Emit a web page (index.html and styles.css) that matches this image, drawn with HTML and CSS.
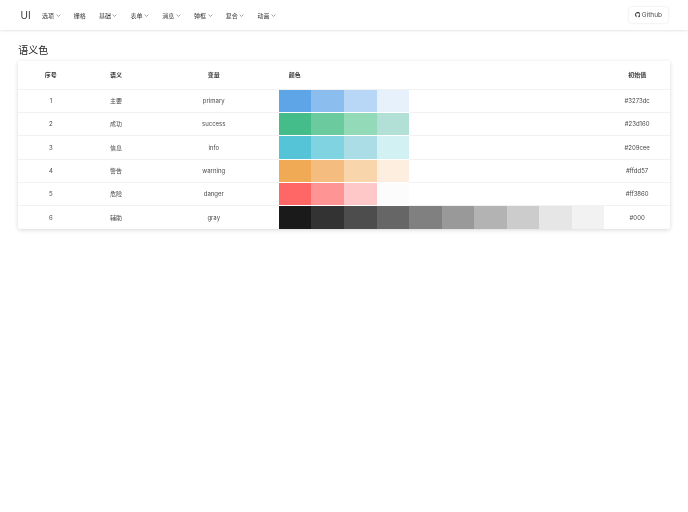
FILE: index.html
```html
<!DOCTYPE html>
<html lang="zh">
<head>
<meta charset="utf-8">
<title>语义色</title>
<link rel="stylesheet" href="styles.css">
</head>
<body>
<header class="navbar">
  <nav class="nav-left">
    <a class="brand">UI</a>
    <a class="nav-item">选项<svg class="chev" viewBox="0 0 8 8"><path d="M1 2.5l3 3 3-3"/></svg></a>
    <a class="nav-item">栅格</a>
    <a class="nav-item">基础<svg class="chev" viewBox="0 0 8 8"><path d="M1 2.5l3 3 3-3"/></svg></a>
    <a class="nav-item">表单<svg class="chev" viewBox="0 0 8 8"><path d="M1 2.5l3 3 3-3"/></svg></a>
    <a class="nav-item">消息<svg class="chev" viewBox="0 0 8 8"><path d="M1 2.5l3 3 3-3"/></svg></a>
    <a class="nav-item">弹框<svg class="chev" viewBox="0 0 8 8"><path d="M1 2.5l3 3 3-3"/></svg></a>
    <a class="nav-item">复合<svg class="chev" viewBox="0 0 8 8"><path d="M1 2.5l3 3 3-3"/></svg></a>
    <a class="nav-item">动画<svg class="chev" viewBox="0 0 8 8"><path d="M1 2.5l3 3 3-3"/></svg></a>
  </nav>
  <a class="github">
    <svg class="gh" viewBox="0 0 16 16"><path d="M8 0C3.58 0 0 3.58 0 8c0 3.54 2.29 6.53 5.47 7.59.4.07.55-.17.55-.38 0-.19-.01-.82-.01-1.49-2.01.37-2.53-.49-2.69-.94-.09-.23-.48-.94-.82-1.13-.28-.15-.68-.52-.01-.53.63-.01 1.08.58 1.23.82.72 1.21 1.87.87 2.33.66.07-.52.28-.87.51-1.07-1.78-.2-3.64-.89-3.64-3.95 0-.87.31-1.59.82-2.15-.08-.2-.36-1.02.08-2.12 0 0 .67-.21 2.2.82.64-.18 1.32-.27 2-.27s1.36.09 2 .27c1.53-1.04 2.2-.82 2.2-.82.44 1.1.16 1.92.08 2.12.51.56.82 1.27.82 2.15 0 3.07-1.87 3.75-3.65 3.95.29.25.54.73.54 1.48 0 1.07-.01 1.93-.01 2.2 0 .21.15.46.55.38A8.01 8.01 0 0 0 16 8c0-4.42-3.58-8-8-8z"/></svg>
    Github
  </a>
</header>
<main class="page">
  <h1 class="title">语义色</h1>
  <div class="card">
    <div class="row head"><span>序号</span><span>语义</span><span>变量</span><span class="left">颜色</span><span>初始值</span></div>
    <div class="row"><span>1</span><span>主要</span><span>primary</span>
      <div class="strip primary"><i></i><i></i><i></i><i></i></div><span>#3273dc</span></div>
    <div class="row"><span>2</span><span>成功</span><span>success</span>
      <div class="strip success"><i></i><i></i><i></i><i></i></div><span>#23d160</span></div>
    <div class="row"><span>3</span><span>信息</span><span>info</span>
      <div class="strip info"><i></i><i></i><i></i><i></i></div><span>#209cee</span></div>
    <div class="row"><span>4</span><span>警告</span><span>warning</span>
      <div class="strip warning"><i></i><i></i><i></i><i></i></div><span>#ffdd57</span></div>
    <div class="row"><span>5</span><span>危险</span><span>danger</span>
      <div class="strip danger"><i></i><i></i><i></i><i></i></div><span>#ff3860</span></div>
    <div class="row last"><span>6</span><span>辅助</span><span>gray</span>
      <div class="strip gray"><i></i><i></i><i></i><i></i><i></i><i></i><i></i><i></i><i></i><i></i></div><span>#000</span></div>
  </div>
</main>
</body>
</html>
```
FILE: styles.css
```css
* { box-sizing: border-box; }
html, body { margin: 0; padding: 0; background: #fff; }
body {
  font-family: Inter, "Noto Sans CJK SC", sans-serif;
  color: #4a4a4a;
  font-size: 6px;
  min-height: 512px;
  filter: blur(.4px);
}
.navbar {
  height: 30px;
  display: flex;
  align-items: center;
  justify-content: space-between;
  padding: 0 20.5px;
  background: #fff;
  box-shadow: 0 0 3px rgba(0,0,0,.2);
}
.nav-left { display: flex; align-items: center; }
.brand { font-size: 10px; color: #363636; width: 21.5px; }
.nav-item {
  display: flex;
  align-items: center;
  color: #363636;
  font-size: 6px;
  margin-right: 13.2px;
}
.chev { width: 5px; height: 5px; margin-left: 1.5px; fill: none; stroke: #666; stroke-width: 1; }
.github {
  display: flex;
  align-items: center;
  gap: 1.5px;
  height: 16px;
  padding: 0 5.5px;
  border-radius: 2px;
  color: #4a4a4a;
  font-size: 6.5px;
  box-shadow: 0 0 2px rgba(0,0,0,.16);
}
.gh { width: 5.5px; height: 5.5px; fill: #333; }
.page { padding: 14px 18.3px 0; }
.title {
  margin: 0 0 3.7px;
  font-size: 10px;
  line-height: 13px;
  font-weight: 400;
  color: #222;
}
.card {
  background: #fff;
  border-radius: 2px;
  box-shadow: 0 1px 4px rgba(0,0,0,.16);
}
.row {
  display: grid;
  grid-template-columns: 1fr 1fr 2fr 5fr 1fr;
  align-items: center;
  height: 23.33px;
  line-height: 10px;
  text-align: center;
  border-bottom: 1px solid #f2f2f2;
  color: #4a4a4a;
}
.row.last { border-bottom: 0; height: 22.9px; }
.row.head {
  height: 29px;
  font-weight: 600;
  color: #363636;
}
.left { text-align: left; padding-left: 10px; }
.strip {
  display: flex;
  align-self: stretch;
}
.strip i {
  display: block;
  flex: none;
  width: 32.57px;
  margin-bottom: -1px;
  border-bottom: 1px solid #fff;
}
.last .strip i { margin-bottom: 0; border-bottom: 0; }
.primary i:nth-child(1) { background: #5ea5e8; }
.primary i:nth-child(2) { background: #8cbdef; }
.primary i:nth-child(3) { background: #b8d6f5; }
.primary i:nth-child(4) { background: #e6f1fc; }
.success i:nth-child(1) { background: #45bd8b; }
.success i:nth-child(2) { background: #6bcb9f; }
.success i:nth-child(3) { background: #93dab9; }
.success i:nth-child(4) { background: #b3e0d6; }
.info i:nth-child(1) { background: #55c4d6; }
.info i:nth-child(2) { background: #80d3e0; }
.info i:nth-child(3) { background: #aadde6; }
.info i:nth-child(4) { background: #d2f1f3; }
.warning i:nth-child(1) { background: #f0a955; }
.warning i:nth-child(2) { background: #f4bd7f; }
.warning i:nth-child(3) { background: #f8d5aa; }
.warning i:nth-child(4) { background: #fdeee0; }
.danger i:nth-child(1) { background: #ff6666; }
.danger i:nth-child(2) { background: #ff9494; }
.danger i:nth-child(3) { background: #ffc8c8; }
.danger i:nth-child(4) { background: #fcfcfc; }
.gray i:nth-child(1) { background: #1a1a1a; }
.gray i:nth-child(2) { background: #333; }
.gray i:nth-child(3) { background: #4d4d4d; }
.gray i:nth-child(4) { background: #666; }
.gray i:nth-child(5) { background: #808080; }
.gray i:nth-child(6) { background: #999; }
.gray i:nth-child(7) { background: #b3b3b3; }
.gray i:nth-child(8) { background: #ccc; }
.gray i:nth-child(9) { background: #e6e6e6; }
.gray i:nth-child(10) { background: #f2f2f2; }
```
